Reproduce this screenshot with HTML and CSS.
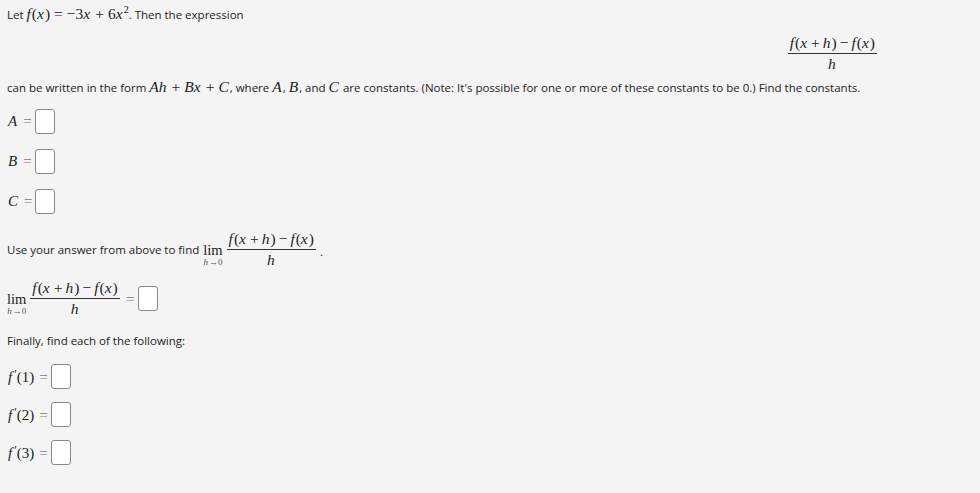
FILE: index.html
```html
<!DOCTYPE html>
<html>
<head>
<meta charset="utf-8">
<link rel="stylesheet" href="styles.css">
</head>
<body>
<div class="page">
  <p class="line first">Let <span class="m"><i>f</i>(<i>x</i>)<span class="op">=</span>−3<i>x</i><span class="op">+</span>6<i>x</i><sup>2</sup></span>. Then the expression</p>
  <div class="display">
    <span class="frac big">
      <span class="num"><i>f</i>(<i>x</i><span class="op">+</span><i>h</i>)<span class="op">−</span><i>f</i>(<i>x</i>)</span>
      <span class="den"><i>h</i></span>
    </span>
  </div>
  <p class="line second">can be written in the form <span class="m"><i>Ah</i><span class="op">+</span><i>Bx</i><span class="op">+</span><i>C</i></span>, where <span class="m"><i>A</i></span>, <span class="m"><i>B</i></span>, and <span class="m"><i>C</i></span> are constants. (Note: It's possible for one or more of these constants to be 0.) Find the constants.</p>

  <div class="answers">
    <div class="row"><span class="m lbl"><i>A</i><span class="op eq">=</span></span><span class="box"></span></div>
    <div class="row"><span class="m lbl"><i>B</i><span class="op eq">=</span></span><span class="box"></span></div>
    <div class="row"><span class="m lbl"><i>C</i><span class="op eq">=</span></span><span class="box"></span></div>
  </div>

  <div class="use">
    <span class="txt">Use your answer from above to find</span>
    <span class="lim m"><span class="limw">lim</span><span class="limsub"><i>h</i>→0</span></span>
    <span class="frac">
      <span class="num"><i>f</i>(<i>x</i><span class="op">+</span><i>h</i>)<span class="op">−</span><i>f</i>(<i>x</i>)</span>
      <span class="den"><i>h</i></span>
    </span><span class="dot">.</span>
  </div>

  <div class="limrow">
    <span class="lim m"><span class="limw">lim</span><span class="limsub"><i>h</i>→0</span></span>
    <span class="frac">
      <span class="num"><i>f</i>(<i>x</i><span class="op">+</span><i>h</i>)<span class="op">−</span><i>f</i>(<i>x</i>)</span>
      <span class="den"><i>h</i></span>
    </span>
    <span class="m eq2">=</span><span class="box"></span>
  </div>

  <p class="line finally">Finally, find each of the following:</p>

  <div class="answers deriv">
    <div class="row"><span class="m lbl"><i>f</i><span class="prime">′</span>(1)<span class="op eq">=</span></span><span class="box"></span></div>
    <div class="row"><span class="m lbl"><i>f</i><span class="prime">′</span>(2)<span class="op eq">=</span></span><span class="box"></span></div>
    <div class="row"><span class="m lbl"><i>f</i><span class="prime">′</span>(3)<span class="op eq">=</span></span><span class="box"></span></div>
  </div>
</div>
</body>
</html>
```

FILE: styles.css
```css
html, body {
  margin: 0;
  padding: 0;
  background: #f4f4f4;
}
.page {
  padding: 5px 7px;
  font-family: "Open Sans", "Noto Sans", sans-serif;
  font-size: 11.5px;
  color: #222;
}
.line {
  margin: 0;
  line-height: 18px;
}
.m {
  font-family: "Liberation Serif", "DejaVu Serif", serif;
  font-size: 15.5px;
  color: #222;
}
.m i, .frac i {
  font-style: italic;
  padding-right: 1px;
}
.op {
  margin: 0 4px;
}
.m sup {
  font-size: 10px;
  line-height: 0;
}
.display {
  display: flex;
  justify-content: flex-end;
  padding-right: 96px;
  margin-top: 11px;
}
.frac {
  display: inline-flex;
  flex-direction: column;
  align-items: center;
  font-family: "Liberation Serif", "DejaVu Serif", serif;
  font-size: 15.5px;
  color: #222;
}
.frac .op {
  margin: 0 3px;
}
.frac .num {
  padding: 0 2px 2px;
  border-bottom: 1px solid #333;
  line-height: 16px;
}
.frac .den {
  line-height: 16px;
  padding-top: 2px;
}
.second {
  margin-top: 6px;
}
.answers {
  margin-top: 12px;
  display: flex;
  flex-direction: column;
  gap: 15px;
}
.row {
  display: flex;
  align-items: center;
  gap: 1px;
  padding-left: 1px;
}
.lbl {
  font-size: 15px;
}
.lbl .op {
  margin: 0 2px 0 5px;
}
.eq {
  color: #777;
}
.prime {
  font-size: 12px;
  vertical-align: 4px;
  margin-left: 1px;
}
.box {
  display: inline-block;
  width: 18px;
  height: 23px;
  border: 1px solid #888;
  border-radius: 3px;
  background: #fff;
}
.use {
  margin-top: 17px;
  display: flex;
  align-items: center;
  gap: 4px;
}
.lim {
  display: inline-flex;
  flex-direction: column;
  align-items: center;
  line-height: 12px;
  padding-top: 12px;
}
.limw {
  font-size: 14.5px;
}
.limsub {
  font-size: 9px;
  color: #555;
}
.dot {
  padding-top: 4px;
}
.limrow {
  margin-top: 12px;
  display: flex;
  align-items: center;
  gap: 4px;
}
.eq2 {
  color: #777;
  margin-left: 2px;
}
.finally {
  margin-top: 15px;
}
.deriv {
  margin-top: 14px;
  gap: 13px;
}
```
